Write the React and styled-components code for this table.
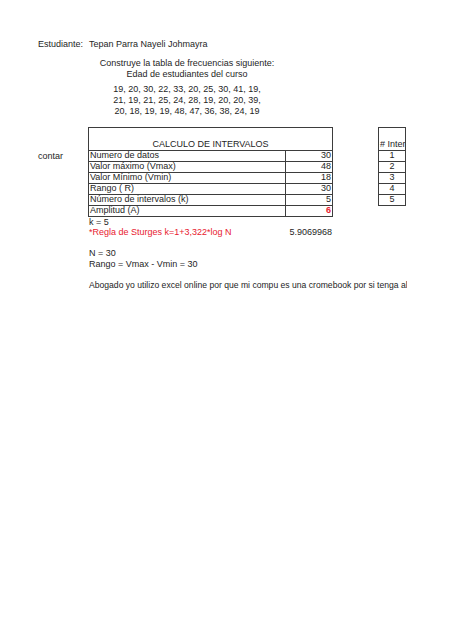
import styled, { createGlobalStyle } from 'styled-components';

const GlobalStyle = createGlobalStyle`
  body {
    margin: 0;
    background: #fff;
    font-family: "Liberation Sans", Arial, sans-serif;
  }
`;

const numbers = [
  '19, 20, 30, 22, 33, 20, 25, 30, 41, 19,',
  '21, 19, 21, 25, 24, 28, 19, 20, 20, 39,',
  '20, 18, 19, 19, 48, 47, 36, 38, 24, 19',
];

const rows = [
  { label: 'Numero de datos', value: '30', side: 'contar', n: 1 },
  { label: 'Valor máximo (Vmax)', value: '48', n: 2 },
  { label: 'Valor Mínimo (Vmin)', value: '18', n: 3 },
  { label: 'Rango ( R)', value: '30', n: 4 },
  { label: 'Número de intervalos (k)', value: '5', n: 5 },
  { label: 'Amplitud (A)', value: '6', hot: true },
];

const App = () => (
  <Page>
    <GlobalStyle />
    <Sheet>
      <Line>
        <Cell $col={1}>Estudiante:</Cell>
        <Cell $col={2}>Tepan Parra Nayeli Johmayra</Cell>
      </Line>
      <Line $h={8} />
      <Line>
        <Cell $col={2} $align="center">Construye la tabla de frecuencias siguiente:</Cell>
      </Line>
      <Line>
        <Cell $col={2} $align="center">Edad de estudiantes del curso</Cell>
      </Line>
      <Line $h={4} />
      {numbers.map((t) => (
        <Line key={t}>
          <Cell $col={2} $align="center">{t}</Cell>
        </Line>
      ))}
      <Line $h={10} />

      <Line $h={24}>
        <Box $col={2} $span={2} $left $top $align="center">
          CALCULO DE INTERVALOS
        </Box>
        <Box $col={5} $left $top $clip>
          # Intervalos
        </Box>
      </Line>
      {rows.map((r) => (
        <Line key={r.label}>
          {r.side && <Cell $col={1}>{r.side}</Cell>}
          <Box $col={2} $left>{r.label}</Box>
          <Box $col={3} $align="flex-end" $red={r.hot} $bold={r.hot}>
            {r.value}
          </Box>
          {r.n && (
            <Box $col={5} $left $align="center">
              {r.n}
            </Box>
          )}
        </Line>
      ))}

      <Line $h={10.5}>
        <Cell $col={2}>k = 5</Cell>
      </Line>
      <Line $h={10.5}>
        <Cell $col={2} $red>*Regla de Sturges k=1+3,322*log N</Cell>
        <Cell $col={3} $align="flex-end">5.9069968</Cell>
      </Line>
      <Line $h={10.5} />
      <Line $h={10.5}>
        <Cell $col={2}>N = 30</Cell>
      </Line>
      <Line $h={10.5}>
        <Cell $col={2}>Rango = Vmax - Vmin = 30</Cell>
      </Line>
      <Line $h={10.5} />
      <Line $h={10.5}>
        <Cell $col={2} $size={8.6}>
          Abogado yo utilizo excel online por que mi compu es una cromebook por si tenga algun error
        </Cell>
      </Line>
    </Sheet>
  </Page>
);

const Page = styled.div`
  padding: 39px 0 0 37px;
`;

const Sheet = styled.div`
  width: 370px;
  overflow: hidden;
  display: flex;
  flex-direction: column;
  font-size: 9px;
  color: #1e1e1e;
`;

const Line = styled.div`
  display: grid;
  grid-template-columns: 51px 198px 47px 45px 28px;
  height: ${({ $h }) => $h || 11}px;
`;

const Cell = styled.div`
  grid-column: ${({ $col }) => $col} / span ${({ $span }) => $span || 1};
  display: flex;
  align-items: flex-end;
  justify-content: ${({ $align }) => $align || 'flex-start'};
  padding: 0 1px 1px 1px;
  white-space: nowrap;
  line-height: 1;
  min-width: 0;
  font-size: ${({ $size }) => ($size ? `${$size}px` : 'inherit')};
  color: ${({ $red }) => ($red ? '#e8202f' : 'inherit')};
  font-weight: ${({ $bold }) => ($bold ? 700 : 400)};
`;

const Box = styled(Cell)`
  box-sizing: border-box;
  border-right: 1px solid #3d3d3d;
  border-bottom: 1px solid #3d3d3d;
  border-left: ${({ $left }) => ($left ? '1px solid #3d3d3d' : 'none')};
  border-top: ${({ $top }) => ($top ? '1px solid #3d3d3d' : 'none')};
  overflow: ${({ $clip }) => ($clip ? 'hidden' : 'visible')};
`;

export default App;
